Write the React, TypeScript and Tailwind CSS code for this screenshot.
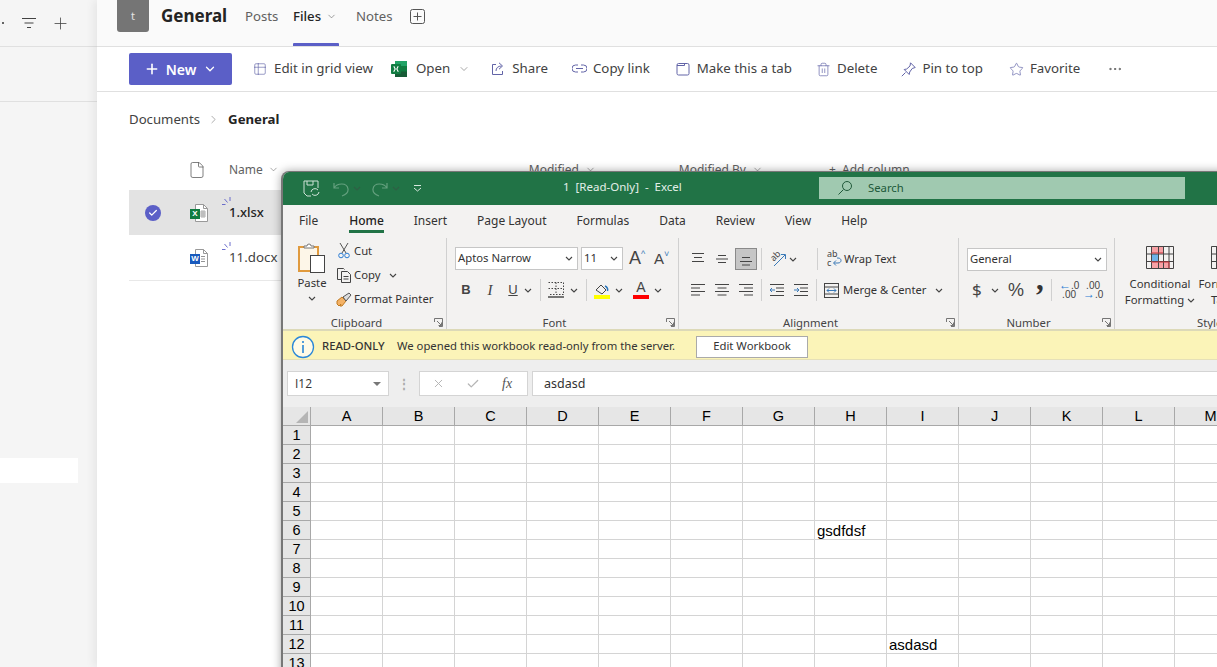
import { Plus, ChevronDown, ChevronRight, Trash2, Star, MoreHorizontal, Table2, X, Check, File } from "lucide-react";
import type { ReactNode } from "react";

const columns = ["A", "B", "C", "D", "E", "F", "G", "H", "I", "J", "K", "L", "M", "N"];
const rows = [1, 2, 3, 4, 5, 6, 7, 8, 9, 10, 11, 12, 13];
const values: Record<string, string> = { H6: "gsdfdsf", I12: "asdasd" };
const tabs = ["File", "Home", "Insert", "Page Layout", "Formulas", "Data", "Review", "View", "Help"];

const Chev = ({ className = "" }: { className?: string }) => (
  <svg viewBox="0 0 8 5" className={`w-[8px] h-[5px] shrink-0 ${className}`} fill="none" stroke="#444" strokeWidth="1.1">
    <path d="M1 1l3 3 3-3" />
  </svg>
);

const ExcelIcon = () => (
  <svg viewBox="0 0 16 16" className="w-[16px] h-[16px] shrink-0">
    <rect x="4" y="0" width="12" height="5.5" fill="#21a366" />
    <rect x="4" y="5" width="12" height="6" fill="#107c41" />
    <rect x="4" y="10.5" width="12" height="5.5" fill="#185c37" />
    <rect x="0" y="3" width="10" height="10" rx="1" fill="#107c41" />
    <path d="M2.800 5.200l1.400 2.700-1.500 2.900M7.200 5.200L5.800 7.900l1.500 2.900" stroke="#fff" strokeWidth="1.1" fill="none" />
  </svg>
);

const DocBadge = ({ color, letter, lines }: { color: string; letter: string; lines: boolean }) => (
  <div className="relative w-[18px] h-[18px] shrink-0">
    <svg viewBox="0 0 18 18" className="w-full h-full">
      <path d="M5.500 .5h8l4 4v13h-12z" fill="#fff" stroke="#999" />
      <path d="M13.500 .5v4h4" fill="none" stroke="#999" />
      {lines ? (
        <path d="M11 7h4v6h-4zM11 9h4M11 11h4M13 7v6" fill="none" stroke="#999" strokeWidth=".8" />
      ) : (
        <path d="M11 7.500h4M11 10h4M11 12.500h4" fill="none" stroke="#888" strokeWidth=".9" />
      )}
      <rect x="0" y="5" width="10" height="10" style={{ fill: color }} />
    </svg>
    <span className="absolute left-0 top-[5px] w-[10px] text-center text-[8px] leading-[10px] font-bold text-white font-['Liberation_Sans',sans-serif]">{letter}</span>
  </div>
);

const Spark = () => (
  <svg viewBox="0 0 11 9" className="absolute left-[-7px] top-[-6px] w-[11px] h-[9px]" fill="none" stroke="#5b5fc7" strokeWidth=".9">
    <path d="M0 7.500h3.500M2.500 2l3 3.500M8 0v4" />
  </svg>
);

const ToolItem = ({ icon, label, className = "" }: { icon: ReactNode; label: string; className?: string }) => (
  <div className={`flex items-center ${className}`}>
    <span className="w-[21px] flex items-center text-[#6264a7]">{icon}</span>
    <span className="text-[13.3px] text-[#424242] whitespace-nowrap">{label}</span>
  </div>
);

const Select = ({ label, className }: { label: string; className: string }) => (
  <div className={`h-[23px] bg-white border border-[#c6c6c6] flex items-center justify-between pl-[2px] pr-[4px] text-[11.3px] text-[#333] ${className}`}>
    <span>{label}</span>
    <Chev />
  </div>
);

const Launcher = () => (
  <svg viewBox="0 0 9 9" className="w-[9px] h-[9px]" fill="none" stroke="#666" strokeWidth=".9">
    <path d="M.5 4V.5h8v8H5M3 3l4.500 4.500M7.500 4.500v3h-3" />
  </svg>
);

const Sep = ({ className = "" }: { className?: string }) => <div className={`w-px bg-[#d0d0d0] shrink-0 ${className}`} />;

const Lines = ({ kind }: { kind: "top" | "middle" | "bottom" | "left" | "center" | "right" }) => {
  const d = {
    top: "M1 1.500h12M3 5.500h8M1 9.500h12",
    middle: "M3 3.500h8M1 7h12M3 10.500h8",
    bottom: "M3 5.500h8M1 9.500h12M3 13h8",
    left: "M0 1.500h14M0 5h9M0 8.500h14M0 12h9",
    center: "M0 1.500h14M2.500 5h9M0 8.500h14M2.500 12h9",
    right: "M0 1.500h14M5 5h9M0 8.500h14M5 12h9",
  }[kind];
  return (
    <svg viewBox="0 0 14 14" className="w-[14px] h-[14px]" fill="none" stroke="#444" strokeWidth="1">
      <path d={d} />
    </svg>
  );
};

const Group = ({ label, width, children }: { label: string; width: string; children: ReactNode }) => (
  <div className={`relative shrink-0 h-full border-r border-[#d0d0d0] flex flex-col ${width}`}>
    <div className="flex-1 min-h-0">{children}</div>
    <div className="h-[16px] pr-[16px] text-center text-[11.3px] leading-[19px] text-[#444]">{label}</div>
    <div className="absolute right-[3px] bottom-[2px]">
      <Launcher />
    </div>
  </div>
);

const ClipboardGroup = () => (
  <div className="flex pl-[13px] pt-[5px]">
    <div className="w-[32px] flex flex-col items-center">
      <svg viewBox="0 0 30 31" className="w-[30px] h-[31px]" fill="none">
        <path d="M2 4h19v24H2z" fill="#fdf6e8" stroke="#e09a3e" strokeWidth="2" />
        <path d="M7 5V3h3a2 2 0 0 1 4 0h3v2z" fill="#fff" stroke="#777" />
        <rect x="13.500" y="12.500" width="14" height="17" fill="#fff" stroke="#444" />
      </svg>
      <span className="mt-[1px] text-[11.3px] leading-[16px] text-[#333]">Paste</span>
      <Chev className="mt-[5px]" />
    </div>
    <div className="ml-[8px] -mt-[4px] flex flex-col text-[11.3px] text-[#333]">
      <div className="h-[24px] flex items-center">
        <svg viewBox="0 0 12 16" className="w-[12px] h-[16px] ml-[2px]" fill="none">
          <path d="M2 0l6 10M10 0L4 10" stroke="#555" />
          <circle cx="3" cy="12.500" r="2.300" stroke="#2b7cd3" />
          <circle cx="9" cy="12.500" r="2.300" stroke="#2b7cd3" />
        </svg>
        <span className="ml-[4px]">Cut</span>
      </div>
      <div className="h-[24px] flex items-center">
        <svg viewBox="0 0 16 16" className="w-[16px] h-[16px] mr-[2px]" fill="none" stroke="#444">
          <path d="M5 12.500H1.500v-11h6l1 1" />
          <path d="M5.500 4.500h6l3 3v8h-9zM7.500 9.500h5M7.500 12h5" />
        </svg>
        <span>Copy</span>
        <Chev className="ml-[9px]" />
      </div>
      <div className="h-[24px] flex items-center">
        <svg viewBox="0 0 16 15" className="w-[16px] h-[15px] mr-[2px]" fill="none">
          <path d="M1 9l5-4 4 4-4 5H4l1-2-2 2-2-2z" fill="#f4b266" stroke="#c07a20" />
          <path d="M7 5l6-4 2 2-5 6z" fill="#ddd" stroke="#555" />
        </svg>
        <span>Format Painter</span>
      </div>
    </div>
  </div>
);

const FontGroup = () => (
  <div className="pl-[8px] pt-[9px]">
    <div className="flex items-center">
      <Select label="Aptos Narrow" className="w-[123px]" />
      <Select label="11" className="w-[42px] ml-[3px]" />
      <span className="ml-[6px] w-[17px] flex text-[18px] leading-[23px] text-[#444] font-['Liberation_Sans',sans-serif]">
        A<span className="text-[#3a7ab8] text-[9px] leading-[14px]">^</span>
      </span>
      <span className="ml-[8px] w-[17px] flex text-[15px] leading-[23px] text-[#444] font-['Liberation_Sans',sans-serif]">
        A<span className="text-[#3a7ab8] text-[9px] leading-[14px]">˅</span>
      </span>
    </div>
    <div className="mt-[9px] h-[22px] flex items-center font-['Liberation_Serif',serif] text-[15px] text-[#444]">
      <span className="w-[24px] ml-[-1px] text-center font-['Liberation_Sans',sans-serif] font-bold text-[13px]">B</span>
      <span className="w-[24px] text-center italic">I</span>
      <span className="w-[22px] text-center font-['Liberation_Sans',sans-serif] text-[13px] underline">U</span>
      <Chev />
      <Sep className="h-[22px] ml-[8px]" />
      <svg viewBox="0 0 16 16" className="ml-[7px] w-[16px] h-[16px]" fill="none" stroke="#444">
        <path d="M.5.5h15v12H.5M8 .5v12M.5 6.500h15" strokeDasharray="1.500 1.500" />
        <path d="M0 15h16" strokeWidth="1.200" stroke="#222" />
      </svg>
      <Chev className="ml-[6px]" />
      <Sep className="h-[22px] ml-[8px]" />
      <svg viewBox="0 0 16 17" className="ml-[7px] w-[16px] h-[17px]" fill="none">
        <path d="M2 8l5-5 5 5-4 4z" stroke="#444" />
        <path d="M11 4c2 1 3 3 2.500 5" stroke="#2a75bb" strokeWidth="1.500" />
        <rect x="0" y="13" width="16" height="4" fill="#ffff00" />
      </svg>
      <Chev className="ml-[5px]" />
      <div className="ml-[10px] w-[16px] flex flex-col items-center font-['Liberation_Sans',sans-serif]">
        <span className="text-[14px] leading-[12px] text-[#444]">A</span>
        <div className="mt-[2px] w-[16px] h-[4px] bg-[#ff0000]" />
      </div>
      <Chev className="ml-[5px]" />
    </div>
  </div>
);

const AlignmentGroup = () => (
  <div className="pl-[12px] pt-[10px]">
    <div className="flex items-center h-[22px]">
      <div className="w-[24px]"><Lines kind="top" /></div>
      <div className="w-[20px]"><Lines kind="middle" /></div>
      <div className="w-[22px] h-[22px] bg-[#c6c6c6] border border-[#8a8a8a] flex items-center justify-center"><Lines kind="bottom" /></div>
      <Sep className="h-[22px] ml-[4px]" />
      <div className="relative ml-[8px] w-[16px] h-[16px]">
        <span className="absolute left-0 top-[-1px] -rotate-45 text-[9px] leading-[12px] text-[#444]">ab</span>
        <svg viewBox="0 0 16 16" className="absolute inset-0 w-[16px] h-[16px]" fill="none" stroke="#3a7ab8">
          <path d="M4 15L15 4M11 3.500h4.500V8" />
        </svg>
      </div>
      <Chev className="ml-[3px]" />
      <Sep className="h-[22px] ml-[20px]" />
      <div className="relative ml-[9px] w-[15px] h-[18px] text-[9px] leading-[8px] text-[#444]">
        <span className="absolute left-0 top-0">ab</span>
        <span className="absolute left-0 top-[9px]">c</span>
        <svg viewBox="0 0 15 18" className="absolute inset-0 w-[15px] h-[18px]" fill="none" stroke="#3a7ab8">
          <path d="M7 13h4c4 0 4-5 0-5h-1M9 10.500L6.500 13 9 15.500" />
        </svg>
      </div>
      <span className="ml-[2px] text-[11.2px] text-[#333] whitespace-nowrap">Wrap Text</span>
    </div>
    <div className="mt-[9px] flex items-center h-[22px]">
      <div className="w-[24px]"><Lines kind="left" /></div>
      <div className="w-[24px]"><Lines kind="center" /></div>
      <div className="w-[18px]"><Lines kind="right" /></div>
      <Sep className="h-[22px] ml-[4px]" />
      <svg viewBox="0 0 14 14" className="ml-[8px] w-[14px] h-[14px]" fill="none" stroke="#444">
        <path d="M0 1.500h14M6 5h8M6 8.500h8M0 12.500h14" />
        <path d="M0 7h5M2 5L0 7l2 2" stroke="#3a7ab8" />
      </svg>
      <svg viewBox="0 0 14 14" className="ml-[10px] w-[14px] h-[14px]" fill="none" stroke="#444">
        <path d="M0 1.500h14M6 5h8M6 8.500h8M0 12.500h14" />
        <path d="M0 7h5M3 5l2 2-2 2" stroke="#3a7ab8" />
      </svg>
      <Sep className="h-[22px] ml-[8px]" />
      <svg viewBox="0 0 15 15" className="ml-[7px] w-[15px] h-[15px]" fill="none" stroke="#444">
        <rect x=".5" y=".5" width="14" height="14" />
        <path d="M.5 4h14M.5 11h14" />
        <path d="M3 7.500h9M5 5.500l-2 2 2 2M10 5.500l2 2-2 2" stroke="#3a7ab8" />
      </svg>
      <span className="ml-[4px] text-[11.2px] text-[#333] whitespace-nowrap">Merge &amp; Center</span>
      <Chev className="ml-[9px]" />
    </div>
  </div>
);

const NumberGroup = () => (
  <div className="pl-[8px] pt-[10px]">
    <Select label="General" className="w-[140px]" />
    <div className="mt-[8px] flex items-center h-[22px] text-[#444]">
      <span className="ml-[5px] w-[11px] text-[17px] leading-[22px]">$</span>
      <Chev className="ml-[8px]" />
      <span className="ml-[9px] text-[18px] leading-[22px] font-['Liberation_Sans',sans-serif]">%</span>
      <span className="ml-[12px] w-[8px] text-[31px] leading-[22px] font-bold text-[#333] font-['Liberation_Serif',serif] -translate-y-[10px]">,</span>
      <Sep className="h-[22px] ml-[7px]" />
      <div className="ml-[7px] w-[17px] text-[10px] leading-[9px] text-right font-['Liberation_Sans',sans-serif]">
        <div><span className="text-[#2b7cd3] text-[12px]">←</span>.0</div>
        <div>.00</div>
      </div>
      <div className="ml-[7px] w-[17px] text-[10px] leading-[9px] text-right font-['Liberation_Sans',sans-serif]">
        <div>.00</div>
        <div><span className="text-[#2b7cd3] text-[12px]">→</span>.0</div>
      </div>
    </div>
  </div>
);

const CondIcon = ({ plain }: { plain?: boolean }) => (
  <svg viewBox="0 0 28 23" className="w-[28px] h-[23px]" fill="none">
    {!plain && (
      <>
        <rect x="5" y="1" width="12" height="6" fill="#f7a1a5" />
        <rect x="5" y="8" width="7" height="7" fill="#6db3e8" />
        <rect x="5" y="16" width="18" height="6" fill="#f7a1a5" />
      </>
    )}
    <path d="M.5.5h27v22H.5zM.5 8h27M.5 15.500h27M5.500.5v22M12.500.5v22M17.500.5v22M23 .5v22" stroke="#444" />
    {!plain && <path d="M5 7h12M5 16h18V22.500" stroke="#c8323a" />}
  </svg>
);

const StylesGroup = () => (
  <div className="relative h-full w-full overflow-hidden">
    <div className="flex pt-[8px] pl-[5px] text-[11.3px] leading-[16px] text-[#333]">
      <div className="w-[80px] flex flex-col items-center">
        <CondIcon />
        <span className="mt-[7px]">Conditional</span>
        <span className="flex items-center">Formatting<Chev className="ml-[3px]" /></span>
      </div>
      <div className="w-[50px] flex flex-col items-center whitespace-nowrap">
        <CondIcon plain />
        <span className="mt-[7px]">Format as</span>
        <span>Table</span>
      </div>
    </div>
    <div className="absolute left-[82px] bottom-0 h-[16px] text-[11.3px] leading-[19px] text-[#444]">Styles</div>
  </div>
);

const ExcelWindow = () => (
  <div className="absolute left-[281px] top-[171px] w-[1000px] h-[520px] rounded-tl-[8px] overflow-hidden border-l-2 border-t border-[#777] bg-[#f3f2f1] shadow-[0_0_10px_rgba(0,0,0,0.35)] font-['Noto_Sans',sans-serif]">
    <div className="h-[33px] bg-[#217346] relative flex items-center pl-[20px]">
      <svg viewBox="0 0 17 17" className="w-[17px] h-[17px]" fill="none" stroke="#cfe3d7">
        <path d="M1 1h14v7M1 1v12l3 3h4M4 1v4h6V1" />
        <path d="M8 12a4 4 0 0 1 7-2M16 12a4 4 0 0 1-7 2" />
      </svg>
      <svg viewBox="0 0 16 16" className="ml-[13px] w-[16px] h-[16px]" fill="none" stroke="#64a07e" strokeWidth="1.200">
        <path d="M1 2v5h5M1 7c3-5 13-6 14 1 .500 4-3 6-6 7" />
      </svg>
      <Chev className="ml-[4px] opacity-40" />
      <svg viewBox="0 0 16 16" className="ml-[11px] w-[16px] h-[16px]" fill="none" stroke="#64a07e" strokeWidth="1.200">
        <path d="M15 2v5h-5M15 7C12 2 2 1 1 8c-.500 4 3 6 6 7" />
      </svg>
      <Chev className="ml-[4px] opacity-40" />
      <svg viewBox="0 0 9 8" className="ml-[13px] w-[9px] h-[8px]" fill="none" stroke="#d8e8de">
        <path d="M1 .5h7M1 3l3.500 3L8 3" />
      </svg>
      <span className="absolute left-[280px] top-[6px] text-[11.5px] leading-[18px] text-[#e3efe8] whitespace-nowrap">1&nbsp; [Read-Only]&nbsp; -&nbsp; Excel</span>
      <div className="absolute left-[536px] top-[5px] w-[366px] h-[22px] bg-[#a0c9b0] flex items-center pl-[19px] text-[11.3px] text-[#21593a]">
        <svg viewBox="0 0 14 14" className="w-[14px] h-[14px]" fill="none" stroke="#21593a">
          <circle cx="9" cy="5" r="4.500" />
          <path d="M5.500 8.500L.5 13.500" />
        </svg>
        <span className="ml-[16px]">Search</span>
      </div>
    </div>

    <div className="h-[33px] flex items-center pl-[16px] pb-[2px] gap-[30px] text-[12px] text-[#333]">
      {tabs.map((t) => (
        <div key={t} className={`relative h-full flex items-center whitespace-nowrap ${t === "Home" ? "ml-[1px] font-medium text-[#222]" : ""}`}>
          {t}
          {t === "Home" && <div className="absolute left-0 right-0 bottom-[3px] h-[3px] bg-[#217346]" />}
        </div>
      ))}
    </div>

    <div className="h-[93px] flex items-stretch border-b-2 border-[#dcd9b8]">
      <Group label="Clipboard" width="w-[164px]"><ClipboardGroup /></Group>
      <Group label="Font" width="w-[232px]"><FontGroup /></Group>
      <Group label="Alignment" width="w-[280px]"><AlignmentGroup /></Group>
      <Group label="Number" width="w-[156px]"><NumberGroup /></Group>
      <div className="w-[160px]"><StylesGroup /></div>
    </div>

    <div className="h-[29px] pt-[3px] bg-[#fbf4b8] border-b border-[#e5e0b8] flex items-center pl-[8px] text-[11.3px] text-[#333]">
      <svg viewBox="0 0 24 24" className="w-[24px] h-[24px]" fill="none">
        <circle cx="12" cy="12" r="10.500" stroke="#2b88d8" strokeWidth="1.300" fill="#fffbe6" />
        <path d="M12 10v8M12 6v2" stroke="#2b88d8" strokeWidth="1.600" />
      </svg>
      <span className="ml-[7px] w-[75px] font-medium">READ-ONLY</span>
      <span className="w-[278px] whitespace-nowrap">We opened this workbook read-only from the server.</span>
      <div className="ml-[21px] w-[112px] h-[22px] bg-white border border-[#aaa] flex items-center justify-center">Edit Workbook</div>
    </div>

    <div className="h-[47px] bg-[#eeeeee] flex items-start pt-[11px] pl-[4px]">
      <div className="w-[102px] h-[25px] bg-white border border-[#d4d4d4] flex items-center justify-between px-[7px] text-[12px] text-[#333] font-['Open_Sans',sans-serif]">
        I12
        <div className="w-0 h-0 border-x-[4px] border-x-transparent border-t-[4px] border-t-[#777]" />
      </div>
      <div className="w-[30px] h-[25px] flex items-center justify-center text-[#aaa] text-[12px] font-bold">⋮</div>
      <div className="w-[109px] h-[25px] bg-white border border-[#d4d4d4] flex items-center pl-[12px] text-[#b5b5b5]">
        <X className="w-[13px] h-[13px]" strokeWidth={1.8} />
        <Check className="ml-[21px] w-[14px] h-[14px]" strokeWidth={2.2} />
        <span className="ml-[22px] text-[14px] italic text-[#555] font-['Liberation_Serif',serif]">fx</span>
      </div>
      <div className="ml-[4px] flex-1 h-[25px] pt-[1px] bg-white border border-[#d4d4d4] flex items-center pl-[11px] text-[12.5px] text-[#333]">asdasd</div>
    </div>

    <div className="grid grid-cols-[28px_repeat(14,72px)] auto-rows-[19px] bg-white font-['Liberation_Sans',sans-serif] text-[15px] leading-[19px] text-black">
      <div className="relative bg-[#e6e6e6] border-r border-b border-[#a8a8a8]">
        <div className="absolute right-[2px] bottom-[2px] w-0 h-0 border-l-[12px] border-l-transparent border-b-[12px] border-b-[#b5b5b5]" />
      </div>
      {columns.map((c) => (
        <div key={c} className="bg-[#e6e6e6] border-r border-b border-[#a8a8a8] text-center text-[14.5px]">{c}</div>
      ))}
      {rows.map((r) => (
        <div key={r} className="contents">
          <div className="bg-[#e6e6e6] border-r border-b border-[#a8a8a8] text-center text-[14.5px]">{r}</div>
          {columns.map((c) => (
            <div key={c} className="border-r border-b border-[#d4d4d4] pl-[2px] whitespace-nowrap">{values[c + r]}</div>
          ))}
        </div>
      ))}
    </div>
  </div>
);

export default function App() {
  return (
    <div className="relative w-[1217px] h-[667px] overflow-hidden flex bg-white font-['Noto_Sans',sans-serif]">
      <aside className="w-[97px] shrink-0 bg-[#f5f5f5] flex flex-col">
        <div className="h-[47px] border-b border-[#e0e0e0] flex items-center pl-[2px]">
          <span className="w-[2px] h-[2px] rounded-full bg-[#333]" />
          <svg viewBox="0 0 16 12" className="ml-[17px] w-[16px] h-[12px]" fill="none" stroke="#424242">
            <path d="M1 1.500h14M3.500 6h9M6 10.500h4" />
          </svg>
          <Plus className="ml-[14px] w-[19px] h-[19px] text-[#424242]" strokeWidth={1} />
        </div>
        <div className="h-[55px] border-b border-[#e0e0e0]" />
        <div className="mt-[356px] w-[78px] h-[25px] bg-white" />
      </aside>

      <main className="flex-1 min-w-0 shadow-[-4px_0_8px_rgba(0,0,0,0.06)] z-0">
        <header className="h-[47px] bg-[#fafafa] border-b border-[#e0e0e0] flex items-start pl-[20px]">
          <div className="w-[32px] h-[32px] rounded-b-[3px] bg-[#757575] text-white/80 text-[11px] flex items-center justify-center">t</div>
          <h1 className="ml-[12px] w-[65px] text-[17px] leading-[31px] font-bold text-[#242424] whitespace-nowrap">General</h1>
          <nav className="ml-[19px] h-full flex items-start text-[13.2px] text-[#616161]">
            <span className="w-[32px] leading-[32px]">Posts</span>
            <div className="relative ml-[16px] w-[46px] h-full flex text-[#242424] font-medium">
              <span className="leading-[32px]">Files</span>
              <ChevronDown className="ml-[5px] mt-[11px] w-[11px] h-[11px] text-[#616161]" strokeWidth={1.3} />
              <div className="absolute left-0 right-0 bottom-0 h-[3px] rounded-t-[1px] bg-[#5b5fc7]" />
            </div>
            <span className="ml-[17px] leading-[32px]">Notes</span>
            <svg viewBox="0 0 15 15" className="ml-[17px] mt-[9px] w-[15px] h-[15px]" fill="none" stroke="#555">
              <rect x=".5" y=".5" width="14" height="14" rx="2" />
              <path d="M7.500 3.500v8M3.500 7.500h8" />
            </svg>
          </nav>
        </header>

        <div className="h-[45px] border-b border-[#e0e0e0] flex items-center pl-[32px]">
          <button className="w-[103px] h-[32px] rounded-[2px] bg-[#5b5fc7] text-white text-[14px] font-semibold flex items-center justify-center">
            <Plus className="w-[16px] h-[16px] mr-[6px]" strokeWidth={2.4} />
            New
            <ChevronDown className="ml-[7px] w-[14px] h-[14px]" strokeWidth={2.2} />
          </button>
          <ToolItem className="ml-[21px]" icon={<Table2 className="w-[14px] h-[14px]" strokeWidth={1.1} />} label="Edit in grid view" />
          <div className="ml-[18px] flex items-center">
            <ExcelIcon />
            <span className="ml-[9px] text-[13.3px] text-[#424242]">Open</span>
            <ChevronDown className="ml-[8px] w-[12px] h-[12px] text-[#777]" strokeWidth={1.3} />
          </div>
          <ToolItem
            className="ml-[21px]"
            icon={
              <svg viewBox="0 0 14 14" className="w-[14px] h-[14px]" fill="none" stroke="currentColor">
                <path d="M5 2.500H1.500v10h10V9M5 9c0-3 2-5 5.500-5M8 .8L11.500 4 8 7.200" />
              </svg>
            }
            label="Share"
          />
          <ToolItem
            className="ml-[24px]"
            icon={
              <svg viewBox="0 0 15 10" className="w-[15px] h-[10px]" fill="none" stroke="currentColor">
                <path d="M6 1H3.500a3.500 3.500 0 0 0 0 7H6M9 1h2.500a3.500 3.500 0 0 1 0 7H9M4 4.500h7" />
              </svg>
            }
            label="Copy link"
          />
          <ToolItem
            className="ml-[26px]"
            icon={
              <svg viewBox="0 0 14 14" className="w-[14px] h-[14px]" fill="none" stroke="currentColor">
                <rect x="1" y="1.500" width="12" height="11.500" rx="1.500" />
                <path d="M1 3.500h7.500V1.500" />
              </svg>
            }
            label="Make this a tab"
          />
          <ToolItem className="ml-[24px]" icon={<Trash2 className="w-[15px] h-[15px]" strokeWidth={1.1} />} label="Delete" />
          <ToolItem
            className="ml-[24px]"
            icon={
              <svg viewBox="0 0 15 15" className="w-[15px] h-[15px]" fill="none" stroke="currentColor">
                <path d="M9.500.8l4.700 4.700-3 1-2.500 3.500-.5 2.500-5-5 2.500-.5L9 4z" />
                <path d="M4.500 10.500L.8 14.200" />
              </svg>
            }
            label="Pin to top"
          />
          <ToolItem className="ml-[26px]" icon={<Star className="w-[15px] h-[15px]" strokeWidth={1.1} />} label="Favorite" />
          <MoreHorizontal className="ml-[27px] w-[16px] h-[16px] text-[#616161]" strokeWidth={1.5} />
        </div>

        <div className="mt-[17px] pl-[32px] flex items-center text-[13.2px] leading-[20px] text-[#424242]">
          <span>Documents</span>
          <ChevronRight className="mx-[7px] w-[13px] h-[13px] text-[#777]" strokeWidth={1.1} />
          <span className="ml-[1px] font-bold text-[#242424]">General</span>
        </div>

        <div className="mt-[20px] pl-[32px] h-[41px] flex items-center text-[12px] text-[#616161]">
          <File className="ml-[59px] w-[18px] h-[18px] text-[#555]" strokeWidth={1} />
          <span className="ml-[23px]">Name</span>
          <ChevronDown className="ml-[5px] w-[11px] h-[11px]" strokeWidth={1.2} />
          <span className="ml-[250px]">Modified</span>
          <ChevronDown className="ml-[6px] w-[11px] h-[11px]" strokeWidth={1.2} />
          <span className="ml-[83px]">Modified By</span>
          <ChevronDown className="ml-[6px] w-[11px] h-[11px]" strokeWidth={1.2} />
          <span className="ml-[66px]">+&nbsp; Add column</span>
        </div>

        <div className="ml-[32px] h-[45px] bg-[#e3e3e3] flex items-center text-[13px] text-[#242424]">
          <div className="ml-[16px] w-[16px] h-[16px] rounded-full bg-[#5b5fc7] flex items-center justify-center">
            <Check className="w-[10px] h-[10px] text-white" strokeWidth={3} />
          </div>
          <div className="ml-[29px]"><DocBadge color="#107c41" letter="X" lines /></div>
          <span className="relative ml-[21px] font-medium">1.xlsx<Spark /></span>
        </div>
        <div className="ml-[32px] h-[46px] border-b border-[#e8e8e8] flex items-center text-[13.3px] text-[#424242]">
          <div className="ml-[61px]"><DocBadge color="#185abd" letter="W" lines={false} /></div>
          <span className="relative ml-[21px]">11.docx<Spark /></span>
        </div>
      </main>

      <ExcelWindow />
    </div>
  );
}
